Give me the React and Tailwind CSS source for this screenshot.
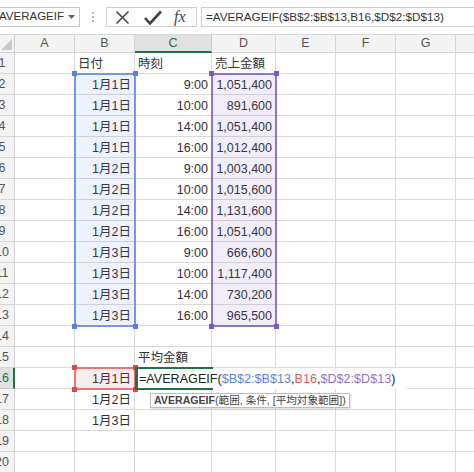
import React from 'react';

const widths = ['w-[15px]', 'w-[60px]', 'w-[60px]', 'w-[77px]', 'w-[64px]', 'w-[60px]', 'w-[60px]', 'w-[60px]', 'w-[60px]'];
const letters = ['A', 'B', 'C', 'D', 'E', 'F', 'G', 'H'];

const sales = [
  '1,051,400', '891,600', '1,051,400', '1,012,400',
  '1,003,400', '1,015,600', '1,131,600', '1,051,400',
  '666,600', '1,117,400', '730,200', '965,500',
];
const times = ['9:00', '10:00', '14:00', '16:00'];

const buildRows = () => {
  const rows = [];
  rows.push({ n: 1, B: '日付', C: '時刻', D: '売上金額', left: true });
  for (let i = 0; i < 12; i++) {
    const day = i < 4 ? '1月1日' : i < 8 ? '1月2日' : '1月3日';
    rows.push({ n: i + 2, B: day, C: times[i % 4], D: sales[i] });
  }
  rows.push({ n: 14 });
  rows.push({ n: 15, C: '平均金額', left: true });
  rows.push({ n: 16, B: '1月1日' });
  rows.push({ n: 17, B: '1月2日' });
  rows.push({ n: 18, B: '1月3日' });
  rows.push({ n: 19 });
  rows.push({ n: 20 });
  return rows;
};

const Corner = ({ pos, color }) => (
  <span className={`absolute w-[5px] h-[5px] ${color} ${pos}`} />
);

const Range = ({ box, border, fill, dot }) => (
  <div className={`absolute pointer-events-none border-2 ${box} ${border} ${fill}`}>
    <Corner color={dot} pos="-left-[4px] -top-[4px]" />
    <Corner color={dot} pos="-right-[4px] -top-[4px]" />
    <Corner color={dot} pos="-left-[4px] -bottom-[4px]" />
    <Corner color={dot} pos="-right-[4px] -bottom-[4px]" />
  </div>
);

const Toolbar = () => (
  <div className="h-[34px] flex items-start pt-[7px] bg-white">
    <div className="w-[80px] h-[20px] border border-[#c6c6c6] border-l-0 flex items-center justify-between pr-[4px] text-[11.5px] text-[#333]">
      <span className="-ml-[1px]">AVERAGEIF</span>
      <svg width="7" height="4" viewBox="0 0 7 4"><path d="M0 0h7L3.5 4z" fill="#666" /></svg>
    </div>
    <div className="w-[26px] h-[20px] flex flex-col items-center justify-center gap-[2px]">
      <span className="w-[2px] h-[2px] bg-[#b8b8b8]" />
      <span className="w-[2px] h-[2px] bg-[#b8b8b8]" />
      <span className="w-[2px] h-[2px] bg-[#b8b8b8]" />
    </div>
    <div className="w-[91px] h-[20px] border border-[#d0d0d0] flex items-center">
      <svg className="ml-[8px]" width="15" height="15" viewBox="0 0 15 15">
        <path d="M1.5 1.5l12 12M13.5 1.5l-12 12" stroke="#444" strokeWidth="1.6" />
      </svg>
      <svg className="ml-[14px]" width="18" height="15" viewBox="0 0 18 15">
        <path d="M1 8l5 5.5L17 1.5" stroke="#444" strokeWidth="2.6" fill="none" />
      </svg>
      <span className="ml-[12px] text-[16px] italic text-[#444] leading-none font-['Liberation_Serif',serif]">fx</span>
    </div>
    <div className="flex-1 ml-[4px] h-[20px] border border-[#d0d0d0] border-r-0 flex items-center pl-[4px] text-[11.7px] text-[#333] whitespace-nowrap overflow-hidden">
      =AVERAGEIF($B$2:$B$13,B16,$D$2:$D$13)
    </div>
  </div>
);

const HeaderRow = () => (
  <div className="flex h-[19px] border-t border-[#dadada]">
    <div className={`${widths[0]} shrink-0 bg-[#f3f3f3] border-r border-b border-[#cfcfcf] relative overflow-hidden`}>
      <svg className="absolute right-[2px] bottom-[2px]" width="11" height="11" viewBox="0 0 11 11">
        <path d="M11 0v11H0z" fill="#c8c8c8" />
      </svg>
    </div>
    {letters.map((l, i) => {
      const sel = l === 'C';
      return (
        <div
          key={l}
          className={`${widths[i + 1]} shrink-0 flex items-center justify-center text-[12.5px] ${
            sel
              ? 'bg-[#e1e1e1] text-[#217346] border-b-2 border-b-[#217346] border-r border-r-[#c6c6c6]'
              : 'bg-[#f3f3f3] text-[#555] border-r border-b border-[#d6d6d6]'
          }`}
        >
          {l}
        </div>
      );
    })}
  </div>
);

const Row = ({ r }) => {
  const sel = r.n === 16;
  const cell = (i, v, align) => (
    <div
      className={`${widths[i]} shrink-0 h-full border-r border-b border-[#dadada] flex items-center pt-[2px] px-[3px] whitespace-nowrap ${
        align === 'left' ? 'justify-start' : 'justify-end'
      }`}
    >
      {v}
    </div>
  );
  return (
    <div className="flex h-[21px] text-[12.5px] text-[#333]">
      <div
        className={`${widths[0]} shrink-0 h-full overflow-hidden flex items-center ${
          sel
            ? 'bg-[#e1e1e1] text-[#217346] border-r-2 border-r-[#217346] border-b border-b-[#c6c6c6]'
            : 'bg-[#f3f3f3] text-[#555] border-r border-b border-[#d6d6d6]'
        }`}
      >
        <div className="w-[26px] -ml-[11px] shrink-0 text-center">{r.n}</div>
      </div>
      {cell(1, '', 'left')}
      {cell(2, r.B, r.left ? 'left' : 'right')}
      {cell(3, r.C, r.left ? 'left' : 'right')}
      {cell(4, r.D, r.left ? 'left' : 'right')}
      {cell(5, '', 'left')}
      {cell(6, '', 'left')}
      {cell(7, '', 'left')}
      {cell(8, '', 'left')}
    </div>
  );
};

export default function App() {
  const rows = buildRows();
  return (
    <div className="w-[474px] h-[472px] overflow-hidden bg-white font-['Liberation_Sans','Noto_Sans_CJK_JP',sans-serif]">
      <Toolbar />
      <div className="relative">
        <HeaderRow />
        {rows.map((r) => (
          <Row key={r.n} r={r} />
        ))}

        <Range box="left-[74px] top-[39px] w-[62px] h-[254px]" border="border-[#7896e4]" fill="bg-[#5b7fe0]/10" dot="bg-[#5b7fe0]" />
        <Range box="left-[211px] top-[39px] w-[66px] h-[254px]" border="border-[#8f74cc]" fill="bg-[#7a58c4]/10" dot="bg-[#7a58c4]" />
        <Range box="left-[74px] top-[333px] w-[62px] h-[23px]" border="border-[#e27a7d]" fill="bg-[#e04848]/10" dot="bg-[#e04848]" />

        <div className="absolute left-[135px] top-[334px] w-[272px] h-[21px] bg-white flex items-center pt-[1px] pl-[4px] text-[12.6px] text-[#222] whitespace-nowrap">
          <span>=AVERAGEIF(</span>
          <span className="text-[#5b84e4]">$B$2:$B$13</span>
          <span>,</span>
          <span className="text-[#e05a5e]">B16</span>
          <span>,</span>
          <span className="text-[#9474c9]">$D$2:$D$13</span>
          <span>)</span>
        </div>
        <div className="absolute left-[135px] top-[333px] w-[78px] h-[23px] border-t-2 border-b-2 border-l-[3px] border-[#217346] pointer-events-none" />

        <div className="absolute left-[150px] top-[359px] h-[15px] px-[3px] bg-white border border-[#bdbdbd] shadow-[1px_1px_2px_rgba(0,0,0,0.15)] flex items-center text-[10.6px] text-[#444] whitespace-nowrap">
          <span className="font-bold">AVERAGEIF</span>
          <span>(範囲, 条件, [平均対象範囲])</span>
        </div>
      </div>
    </div>
  );
}
